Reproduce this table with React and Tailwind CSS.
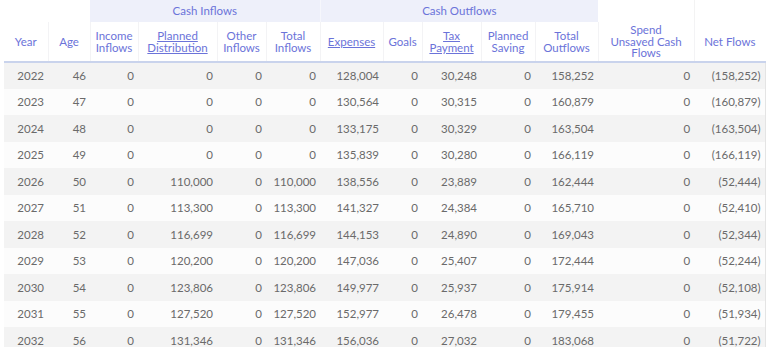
import React from "react";

const cols = [
  { key: "year", label: ["Year"], w: 44 },
  { key: "age", label: ["Age"], w: 42 },
  { key: "income", label: ["Income", "Inflows"], w: 48 },
  { key: "planned", label: ["Planned", "Distribution"], w: 79, link: true },
  { key: "other", label: ["Other", "Inflows"], w: 49 },
  { key: "totalIn", label: ["Total", "Inflows"], w: 54 },
  { key: "expenses", label: ["Expenses"], w: 63, link: true },
  { key: "goals", label: ["Goals"], w: 39 },
  { key: "tax", label: ["Tax", "Payment"], w: 59, link: true },
  { key: "saving", label: ["Planned", "Saving"], w: 54 },
  { key: "totalOut", label: ["Total", "Outflows"], w: 63 },
  { key: "spend", label: ["Spend", "Unsaved Cash", "Flows"], w: 96 },
  { key: "net", label: ["Net Flows"], w: 71 },
];

// year, age, planned distribution, expenses, tax, total outflows, net
const raw = [
  ["2022", "46", "0", "128,004", "30,248", "158,252", "(158,252)"],
  ["2023", "47", "0", "130,564", "30,315", "160,879", "(160,879)"],
  ["2024", "48", "0", "133,175", "30,329", "163,504", "(163,504)"],
  ["2025", "49", "0", "135,839", "30,280", "166,119", "(166,119)"],
  ["2026", "50", "110,000", "138,556", "23,889", "162,444", "(52,444)"],
  ["2027", "51", "113,300", "141,327", "24,384", "165,710", "(52,410)"],
  ["2028", "52", "116,699", "144,153", "24,890", "169,043", "(52,344)"],
  ["2029", "53", "120,200", "147,036", "25,407", "172,444", "(52,244)"],
  ["2030", "54", "123,806", "149,977", "25,937", "175,914", "(52,108)"],
  ["2031", "55", "127,520", "152,977", "26,478", "179,455", "(51,934)"],
  ["2032", "56", "131,346", "156,036", "27,032", "183,068", "(51,722)"],
];

const rows = raw.map(([year, age, planned, expenses, tax, totalOut, net]) => [
  year, age, "0", planned, "0", planned, expenses, "0", tax, "0", totalOut, "0", net,
]);

export default function App() {
  return (
    <div className="w-[768px] h-[347px] overflow-hidden bg-white pl-[4px] font-['Lato',sans-serif]">
      <table className="table-fixed border-collapse w-[761px] text-[11.5px]">
        <colgroup>
          {cols.map((c) => (
            <col key={c.key} style={{ width: c.w }} />
          ))}
        </colgroup>
        <thead>
          <tr className="h-[22px] text-[#6b73d9]">
            <th colSpan={2} className="font-normal"></th>
            <th colSpan={4} className="font-normal bg-[#eef0fa] text-center border-r border-[#f6f7fc]">Cash Inflows</th>
            <th colSpan={5} className="font-normal bg-[#eef0fa] text-center">Cash Outflows</th>
            <th className="font-normal border-r border-[#f3f3f3]"></th>
            <th className="font-normal"></th>
          </tr>
          <tr className="h-[40px] border-b-2 border-[#c9d3ec] text-[#6b73d9]">
            {cols.map((c) => (
              <th key={c.key} className="font-normal leading-[11.5px] text-center px-0 border-r border-[#f3f3f5] last:border-r-0">
                {c.label.map((l, i) => (
                  <div key={i} className={c.link ? "underline" : ""}>{l}</div>
                ))}
              </th>
            ))}
          </tr>
        </thead>
        <tbody className="text-[#6a6a6a]">
          {rows.map((r, i) => (
            <tr key={i} className={`h-[26.5px] ${i % 2 === 0 ? "bg-[#f3f3f3]" : "bg-[#fcfcfc]"}`}>
              {r.map((v, j) => (
                <td key={j} className={`text-right pr-[4px] whitespace-nowrap ${j === 12 ? "border-r border-[#e4e4e4]" : ""}`}>{v}</td>
              ))}
            </tr>
          ))}
        </tbody>
      </table>
    </div>
  );
}
